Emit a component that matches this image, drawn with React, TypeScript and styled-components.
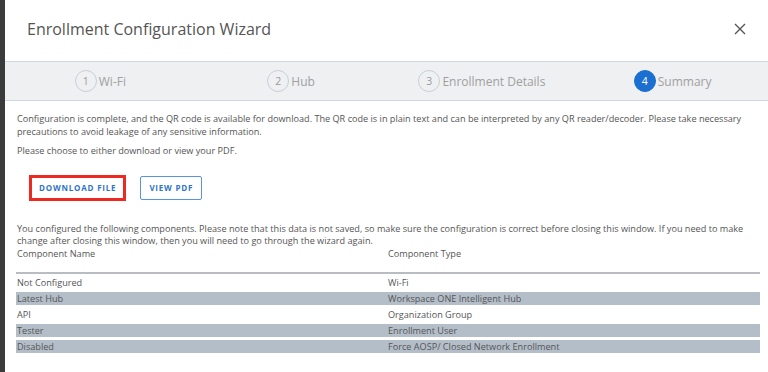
import React from "react";
import styled, { createGlobalStyle } from "styled-components";

const GlobalStyle = createGlobalStyle`
  html, body {
    margin: 0;
    padding: 0;
    background: #3b3b3b;
  }
  body {
    font-family: "Open Sans", "Noto Sans", Arial, sans-serif;
  }
`;

const Page = styled.div`
  display: flex;
  height: 372px;
  overflow: hidden;
  background: #3b3b3b;
`;

const Modal = styled.div`
  flex: 1;
  margin-left: 5px;
  background: #fff;
  display: flex;
  flex-direction: column;
`;

const Header = styled.div`
  height: 61px;
  display: flex;
  align-items: center;
  justify-content: space-between;
  padding: 0 20px 3px 22px;
  box-sizing: border-box;
`;

const Title = styled.h1`
  margin: 0;
  font-size: 16px;
  font-weight: 400;
  color: #555;
`;

const Close = styled.button`
  border: none;
  background: none;
  padding: 0;
  width: 16px;
  height: 16px;
  display: flex;
  align-items: center;
  justify-content: center;
  cursor: pointer;
`;

const Steps = styled.div`
  height: 40px;
  box-sizing: border-box;
  border-top: 1px solid #cfd8e1;
  border-bottom: 1px solid #cfd8e1;
  background: #eef0f2;
  display: grid;
  grid-template-columns: repeat(4, 1fr);
`;

const Step = styled.div`
  display: flex;
  align-items: center;
  justify-content: center;
  gap: 2px;
  font-size: 12px;
  color: #a0a0a0;
`;

const StepNum = styled.span<{ $active?: boolean }>`
  width: 22px;
  height: 22px;
  box-sizing: border-box;
  border-radius: 50%;
  display: flex;
  align-items: center;
  justify-content: center;
  font-size: 10.5px;
  border: 1px solid ${(p) => (p.$active ? "#1b6fd0" : "#c8d0d8")};
  background: ${(p) => (p.$active ? "#1b6fd0" : "transparent")};
  color: ${(p) => (p.$active ? "#fff" : "#9b9b9b")};
`;

const Body = styled.div`
  padding: 12px 8px 0 11px;
  font-size: 9.15px;
  line-height: 12.5px;
  color: #555;
`;

const Para = styled.p<{ $gap?: number }>`
  margin: 0 0 ${(p) => p.$gap ?? 7}px 1px;
`;

const Actions = styled.div`
  display: flex;
  align-items: center;
  gap: 14px;
  margin: 17px 0 22px 13px;
`;

const Marked = styled.div`
  border: 3px solid #ec2a22;
  display: flex;
`;

const Action = styled.button<{ $outlined?: boolean }>`
  font-family: inherit;
  font-size: 8px;
  font-weight: 700;
  letter-spacing: 0.8px;
  color: #2f74c6;
  background: #fff;
  height: ${(p) => (p.$outlined ? 24 : 20)}px;
  padding: 0 ${(p) => (p.$outlined ? 8 : 7)}px;
  border: ${(p) => (p.$outlined ? "1px solid #5a94dc" : "none")};
  border-radius: 2px;
  cursor: pointer;
`;

const Table = styled.div``;

const HeadRow = styled.div`
  display: grid;
  grid-template-columns: 371px 1fr;
  padding: 0 1px 12px;
  border-bottom: 2px solid #b9bcc0;
  margin-bottom: 2px;
`;

const Row = styled.div<{ $alt?: boolean }>`
  display: grid;
  grid-template-columns: 371px 1fr;
  height: 13px;
  line-height: 13px;
  padding: 0 1px;
  border-bottom: 3px solid #fff;
  background: ${(p) => (p.$alt ? "#b4bec9" : "#fff")};
`;

const rows = [
  { name: "Not Configured", type: "Wi-Fi", alt: false },
  { name: "Latest Hub", type: "Workspace ONE Intelligent Hub", alt: true },
  { name: "API", type: "Organization Group", alt: false },
  { name: "Tester", type: "Enrollment User", alt: true },
  { name: "Disabled", type: "Force AOSP/ Closed Network Enrollment", alt: true },
];

const steps = ["Wi-Fi", "Hub", "Enrollment Details", "Summary"];

export default function App() {
  return (
    <>
      <GlobalStyle />
      <Page>
        <Modal>
          <Header>
            <Title>Enrollment Configuration Wizard</Title>
            <Close aria-label="Close">
              <svg width="12" height="12" viewBox="0 0 12 12">
                <path d="M1 1L11 11M11 1L1 11" stroke="#555" strokeWidth="1.4" />
              </svg>
            </Close>
          </Header>
          <Steps>
            {steps.map((s, i) => (
              <Step key={s}>
                <StepNum $active={i === 3}>{i + 1}</StepNum>
                {s}
              </Step>
            ))}
          </Steps>
          <Body>
            <Para>
              Configuration is complete, and the QR code is available for download. The QR code is in plain text and can be
              interpreted by any QR reader/decoder. Please take necessary precautions to avoid leakage of any sensitive
              information.
            </Para>
            <Para $gap={0}>Please choose to either download or view your PDF.</Para>
            <Actions>
              <Marked>
                <Action>DOWNLOAD FILE</Action>
              </Marked>
              <Action $outlined>VIEW PDF</Action>
            </Actions>
            <Para $gap={0}>
              You configured the following components. Please note that this data is not saved, so make sure the configuration
              is correct before closing this window. If you need to make change after closing this window, then you will need
              to go through the wizard again.
            </Para>
            <Table>
              <HeadRow>
                <span>Component Name</span>
                <span>Component Type</span>
              </HeadRow>
              {rows.map((r) => (
                <Row key={r.name} $alt={r.alt}>
                  <span>{r.name}</span>
                  <span>{r.type}</span>
                </Row>
              ))}
            </Table>
          </Body>
        </Modal>
      </Page>
    </>
  );
}
